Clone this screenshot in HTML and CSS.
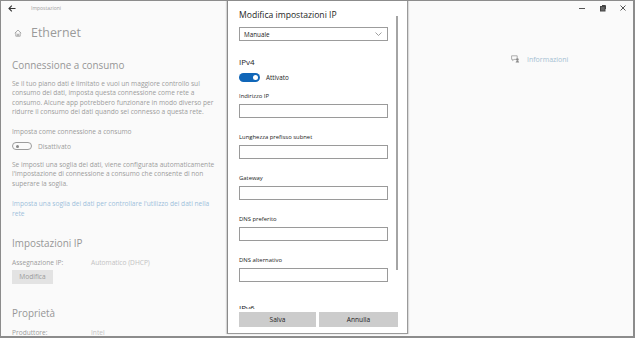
FILE: index.html
```html
<!DOCTYPE html>
<html lang="it">
<head>
<meta charset="utf-8">
<title>Impostazioni</title>
<link rel="stylesheet" href="styles.css">
</head>
<body>
<div class="window">
  <div class="titlebar">
    <svg class="back" width="8" height="7" viewBox="0 0 8 7"><path d="M7.5 3.5H1M3.8 0.7L1 3.5l2.8 2.8" fill="none" stroke="#333" stroke-width="1.1"/></svg>
    <span class="apptitle">Impostazioni</span>
    <div class="controls">
      <svg width="8" height="8" viewBox="0 0 8 8"><path d="M1 4.5h6" stroke="#555" stroke-width="1"/></svg>
      <svg width="8" height="8" viewBox="0 0 8 8"><rect x="1.5" y="2.5" width="4.5" height="4.5" fill="#666" stroke="#444" stroke-width="1"/><path d="M3 1.5h3.5v3.5" fill="none" stroke="#444" stroke-width="1"/></svg>
      <svg width="8" height="8" viewBox="0 0 8 8"><path d="M1.5 1.5l5 5M6.5 1.5l-5 5" stroke="#555" stroke-width="1"/></svg>
    </div>
  </div>
  <div class="body">
    <main class="main">
      <h1 class="page-title"><svg class="home" width="8" height="8" viewBox="0 0 8 8"><path d="M0.8 4.2L4 1l3.2 3.2M1.8 3.4V7.2h4.4V3.4M3.3 7.2V5.2h1.4v2" fill="none" stroke="#9b9b9b" stroke-width="0.8"/></svg>Ethernet</h1>
      <h2 class="section first">Connessione a consumo</h2>
      <p class="para p1">Se il tuo piano dati è limitato e vuoi un maggiore controllo sul consumo dei dati, imposta questa connessione come rete a consumo. Alcune app potrebbero funzionare in modo diverso per ridurre il consumo dei dati quando sei connesso a questa rete.</p>
      <div class="label">Imposta come connessione a consumo</div>
      <div class="toggle-row"><span class="toggle off"><span class="knob"></span></span><span class="toggle-text">Disattivato</span></div>
      <p class="para p2">Se imposti una soglia dei dati, viene configurata automaticamente l'impostazione di connessione a consumo che consente di non superare la soglia.</p>
      <p class="link">Imposta una soglia dei dati per controllare l'utilizzo dei dati nella rete</p>
      <h2 class="section ip">Impostazioni IP</h2>
      <div class="prop"><span class="k">Assegnazione IP:</span><span class="v">Automatico (DHCP)</span></div>
      <div class="btn-mod">Modifica</div>
      <h2 class="section props">Proprietà</h2>
      <div class="prop"><span class="k">Produttore:</span><span class="v">Intel</span></div>
    </main>
    <aside class="side">
      <div class="info">
        <svg width="9" height="8" viewBox="0 0 9 8"><path d="M0.6 0.8h5.6v3.6H3L1.6 5.6V4.4h-1z" fill="none" stroke="#9a9a9a" stroke-width="0.8"/><circle cx="6.4" cy="4.6" r="1.3" fill="#8a8a8a"/><path d="M4.6 7.6c0.3-1.2 1-1.6 1.8-1.6s1.5 0.4 1.8 1.6z" fill="#8a8a8a"/></svg>
        <span>Informazioni</span>
      </div>
    </aside>
  </div>

  <div class="dialog">
    <div class="dlg-scroll">
      <div class="dlg-title">Modifica impostazioni IP</div>
      <div class="select"><span>Manuale</span><svg width="7" height="4" viewBox="0 0 7 4"><path d="M0.5 0.5l3 3 3-3" fill="none" stroke="#888" stroke-width="0.8"/></svg></div>
      <div class="ipv">IPv4</div>
      <div class="toggle-row on-row"><span class="toggle on"><span class="knob"></span></span><span class="toggle-text dark">Attivato</span></div>
      <div class="field first-field"><div class="flabel">Indirizzo IP</div><div class="input"></div></div>
      <div class="field"><div class="flabel">Lunghezza prefisso subnet</div><div class="input"></div></div>
      <div class="field"><div class="flabel">Gateway</div><div class="input"></div></div>
      <div class="field"><div class="flabel">DNS preferito</div><div class="input"></div></div>
      <div class="field"><div class="flabel">DNS alternativo</div><div class="input"></div></div>
      <div class="ipv ipv6">IPv6</div>
      <div class="scrollbar"></div>
    </div>
    <div class="dlg-footer">
      <div class="dbtn">Salva</div>
      <div class="dbtn wide">Annulla</div>
    </div>
  </div>
</div>
</body>
</html>
```

FILE: styles.css
```css
* { box-sizing: border-box; }
html, body { margin: 0; padding: 0; }
body {
  width: 635px;
  height: 338px;
  overflow: hidden;
  font-family: "Open Sans", "Noto Sans", sans-serif;
  background: #8c8c8c;
}
.window {
  position: relative;
  width: 635px;
  height: 338px;
  border-top: 1px solid #8c8c8c;
  border-left: 1px solid #8c8c8c;
  border-right: 2px solid #8c8c8c;
  border-bottom: 2px solid #8c8c8c;
  background: #fafafa;
  overflow: hidden;
}
.titlebar {
  height: 14px;
  display: flex;
  align-items: center;
  padding-left: 7px;
}
.back { display: block; }
.apptitle {
  margin-left: 15px;
  font-size: 5px;
  color: #a0a0a0;
  line-height: 14px;
}
.controls {
  margin-left: auto;
  display: flex;
  align-items: center;
  gap: 12px;
  padding-right: 6px;
}
.controls svg { display: block; }
.controls svg:first-child { margin-right: 1px; }
.body {
  display: flex;
}
.main {
  width: 225px;
  padding-left: 11px;
}
.page-title {
  margin: 8px 0 0 0;
  height: 20px;
  display: flex;
  align-items: center;
  font-weight: 400;
  font-size: 12.4px;
  color: #9a9a9a;
  line-height: 20px;
}
.home { margin-left: 2px; margin-right: 9px; display: block; }
.section {
  margin: 0;
  font-weight: 400;
  font-size: 9.9px;
  line-height: 14px;
  color: #969696;
}
.section.first { margin-top: 15px; }
.section.ip { margin-top: 17px; }
.section.props { margin-top: 22px; }
.para {
  margin: 0;
  font-size: 6.6px;
  line-height: 9.3px;
  color: #9c9c9c;
  width: 206px;
}
.p1 { margin-top: 7px; }
.p2 { margin-top: 9px; }
.label {
  margin-top: 11px;
  font-size: 6.6px;
  line-height: 10px;
  color: #9c9c9c;
}
.toggle-row {
  display: flex;
  align-items: center;
  height: 10px;
  margin-top: 4px;
}
.toggle {
  width: 20px;
  height: 8px;
  border-radius: 4px;
  position: relative;
  display: block;
  flex: none;
}
.toggle.off { border: 1px solid #9c9c9c; background: #fafafa; }
.toggle.off .knob {
  position: absolute; left: 3px; top: 1.5px;
  width: 3px; height: 3px; border-radius: 50%; background: #888;
}
.toggle.on { background: #1066b8; height: 9px; width: 21px; border-radius: 5px; }
.toggle.on .knob {
  position: absolute; right: 2.5px; top: 2px;
  width: 5px; height: 5px; border-radius: 50%; background: #fff;
}
.toggle-text {
  margin-left: 6px;
  font-size: 6.6px;
  color: #9c9c9c;
}
.toggle-text.dark { color: #222; font-size: 6.3px; }
.link {
  margin: 11px 0 0 0;
  font-size: 6.6px;
  line-height: 10px;
  color: #9dbfda;
  width: 206px;
}
.prop {
  display: flex;
  margin-top: 8px;
  font-size: 6.6px;
  line-height: 10px;
  color: #9c9c9c;
}
.prop .k { width: 79px; }
.prop .v { color: #c2c2c2; }
.btn-mod {
  margin-top: 2px;
  width: 41px;
  height: 14px;
  background: #e3e3e3;
  color: #9a9a9a;
  font-size: 6.6px;
  line-height: 14px;
  text-align: center;
}
.side {
  flex: 1;
  padding-left: 285px;
}
.info {
  margin-top: 39px;
  display: flex;
  align-items: center;
  height: 10px;
  font-size: 7px;
  color: #a6bfd2;
}
.info svg { display: block; margin-right: 7px; }

/* modal dialog overlay */
.dialog {
  position: absolute;
  left: 226px;
  top: -1px;
  width: 181px;
  height: 334px;
  background: #fff;
  border-left: 1px solid #8a8a8a;
  border-right: 1px solid #9a9a9a;
  border-bottom: 1px solid #9a9a9a;
  box-shadow: -1px 0 1px rgba(0,0,0,0.15), 1px 0 1px rgba(0,0,0,0.12);
  display: flex;
  flex-direction: column;
}
.dlg-scroll {
  position: relative;
  flex: 1;
  overflow: hidden;
  padding-left: 11px;
  color: #222;
}
.dlg-title {
  margin-top: 8px;
  font-size: 8.6px;
  line-height: 14px;
  color: #1e1e1e;
}
.select {
  margin-top: 5px;
  width: 149px;
  height: 14px;
  border: 1px solid #9c9c9c;
  display: flex;
  align-items: center;
  justify-content: space-between;
  padding: 0 5px 0 4px;
  font-size: 6.3px;
  color: #222;
}
.select svg { display: block; }
.ipv {
  margin-top: 15px;
  font-size: 8px;
  line-height: 12px;
  color: #1e1e1e;
}
.on-row { margin-top: 5px; height: 9px; }
.field { margin-top: 14px; }
.field.first-field { margin-top: 9px; }
.flabel {
  font-size: 5.9px;
  line-height: 10px;
  color: #222;
}
.input {
  margin-top: 3px;
  width: 149px;
  height: 14px;
  border: 1px solid #9a9a9a;
  background: #fff;
}
.ipv6 { margin-top: 20px; }
.scrollbar {
  position: absolute;
  left: 168px;
  top: 16px;
  width: 2px;
  height: 254px;
  background: #a4a4a4;
}
.dlg-footer {
  height: 24px;
  flex: none;
  display: flex;
  gap: 3px;
  padding: 3px 9px 6px 11px;
  background: #fff;
}
.dbtn {
  width: 77px;
  height: 15px;
  background: #cccccc;
  font-size: 6.6px;
  line-height: 15px;
  text-align: center;
  color: #222;
}
.dbtn.wide { width: 79px; }
```
